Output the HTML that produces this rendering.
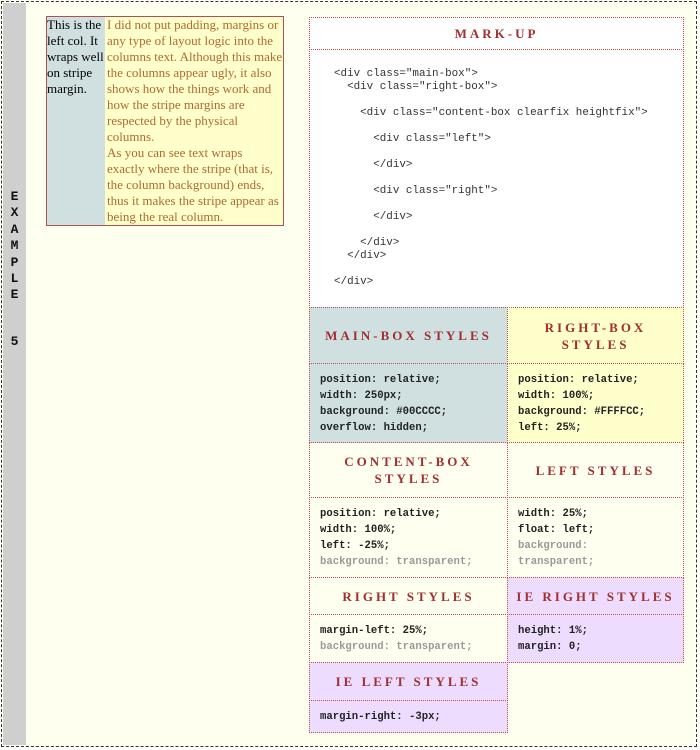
<!DOCTYPE html>
<html><head><style>
body{margin:0;width:700px;height:750px;background:#fff;position:relative;overflow:hidden}
.outer{position:absolute;left:1px;top:1px;width:694px;height:744px;border:1px dashed #333;background:#fffff0}
.stripe{position:absolute;left:3px;top:3px;width:23px;height:742px;background:#cfcfcf}
.ex{position:absolute;left:3px;width:23px;top:189px;text-align:center;font:bold 13px/16.4px "Liberation Mono",monospace;color:#111}
.lb{position:absolute;left:46px;top:16px;width:236px;height:208px;border:1px solid #b05050;background:#ffffcc;font:13px/16px "Liberation Serif",serif}
.lc{position:absolute;left:0;top:0;width:58px;height:208px;background:#d0e0e0;color:#000}
.rc{position:absolute;left:60px;top:0;width:176px;color:#b06a30}
.c{position:absolute;border:1px dotted #c05050;box-sizing:border-box}
.h{font:bold 13px/17px "Liberation Serif",serif;letter-spacing:3px;color:#a03030;text-align:center;display:flex;align-items:center;justify-content:center}
.code{font:bold 10.6px/16px "Liberation Mono",monospace;color:#222;padding:8px 0 0 10px;white-space:pre}
.g{color:#999}
.mk{font:10.9px/13px "Liberation Mono",monospace;color:#333;white-space:pre;position:absolute;left:334px;top:68px}
</style></head><body>
<div class="outer"></div>
<div class="stripe"></div>
<div class="ex">E<br>X<br>A<br>M<br>P<br>L<br>E<br><br><div style="margin-top:14px">5</div></div>
<div class="lb"><div class="lc">This is the left col. It wraps well on stripe margin.</div><div class="rc">I did not put padding, margins or any type of layout logic into the columns text. Although this make the columns appear ugly, it also shows how the things work and how the stripe margins are respected by the physical columns.<br>As you can see text wraps exactly where the stripe (that is, the column background) ends, thus it makes the stripe appear as being the real column.</div></div>

<div class="c" style="left:309px;top:17px;width:375px;height:291px;background:#fff"></div>
<div class="c h" style="left:309px;top:17px;width:375px;height:33px;">MARK-UP</div>
<div class="mk">&lt;div class="main-box"&gt;
  &lt;div class="right-box"&gt;

    &lt;div class="content-box clearfix heightfix"&gt;

      &lt;div class="left"&gt;

      &lt;/div&gt;

      &lt;div class="right"&gt;

      &lt;/div&gt;

    &lt;/div&gt;
  &lt;/div&gt;

&lt;/div&gt;</div>

<div class="c h" style="left:309px;top:307px;width:199px;height:57px;background:#d0e0e0">MAIN-BOX STYLES</div>
<div class="c h" style="left:507px;top:307px;width:177px;height:57px;background:#ffffcc">RIGHT-BOX<br>STYLES</div>
<div class="c code" style="left:309px;top:363px;width:199px;height:80px;background:#d0e0e0">position: relative;
width: 250px;
background: #00CCCC;
overflow: hidden;</div>
<div class="c code" style="left:507px;top:363px;width:177px;height:80px;background:#ffffcc">position: relative;
width: 100%;
background: #FFFFCC;
left: 25%;</div>

<div class="c h" style="left:309px;top:442px;width:199px;height:56px">CONTENT-BOX<br>STYLES</div>
<div class="c h" style="left:507px;top:442px;width:177px;height:56px">LEFT STYLES</div>
<div class="c code" style="left:309px;top:497px;width:199px;height:81px">position: relative;
width: 100%;
left: -25%;
<span class="g">background: transparent;</span></div>
<div class="c code" style="left:507px;top:497px;width:177px;height:81px;line-height:16px">width: 25%;
float: left;
<span class="g" style="line-height:11px">background:
transparent;</span></div>

<div class="c h" style="left:309px;top:577px;width:199px;height:38px">RIGHT STYLES</div>
<div class="c h" style="left:507px;top:577px;width:177px;height:38px;background:#eedcff">IE RIGHT STYLES</div>
<div class="c code" style="left:309px;top:614px;width:199px;height:49px">margin-left: 25%;
<span class="g">background: transparent;</span></div>
<div class="c code" style="left:507px;top:614px;width:177px;height:49px;background:#eedcff">height: 1%;
margin: 0;</div>

<div class="c h" style="left:309px;top:662px;width:199px;height:39px;background:#eedcff">IE LEFT STYLES</div>
<div class="c code" style="left:309px;top:700px;width:199px;height:33px;background:#eedcff">margin-right: -3px;</div>
</body></html>
